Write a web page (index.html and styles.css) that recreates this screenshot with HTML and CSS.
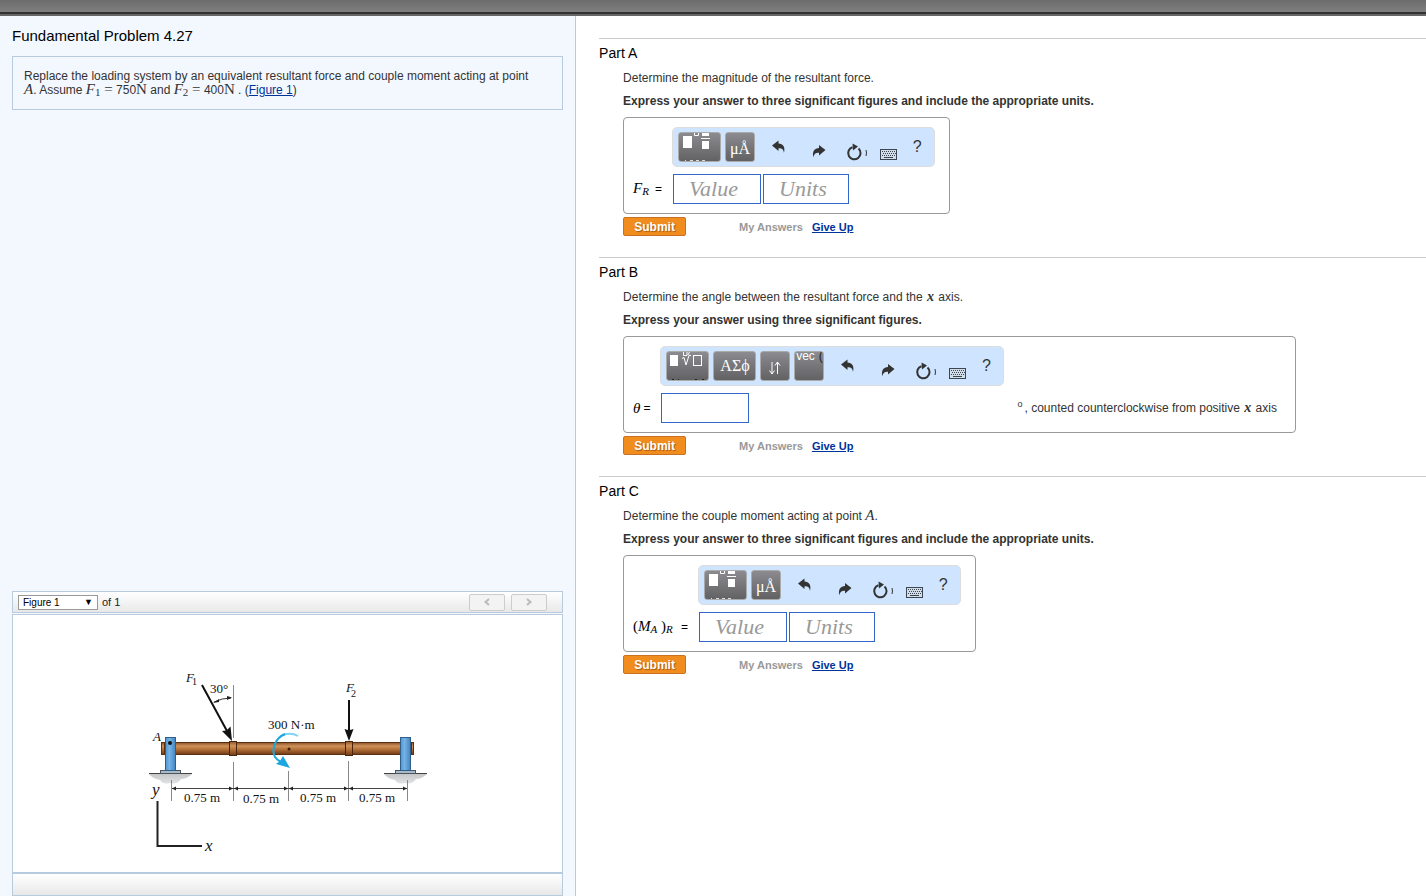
FILE: index.html
```html
<!DOCTYPE html>
<html lang="en">
<head>
  <meta charset="UTF-8" />
  <meta name="viewport" content="width=device-width, initial-scale=1.0" />
  <title>Fundamental Problem 4.27</title>
  <link rel="stylesheet" href="styles.css">
</head>
<body>
  <!-- Shared toolbar icons -->
  <svg class="icon-defs" aria-hidden="true">
    <symbol id="icon-undo" viewBox="0 0 35 30">
      <path d="M10 13.5 L16.5 8.5 V11.5 C21 11.5 23.5 15 22 21 C21.5 17.5 20 16.2 16.5 16.3 V19 Z" fill="#333"/>
    </symbol>
    <symbol id="icon-redo" viewBox="0 0 35 30">
      <path d="M28.5 18 L22 13 V16 C17.5 16 15 19.5 16.3 25.5 C17 22 18.5 20.8 22 20.8 V23.5 Z" fill="#333"/>
    </symbol>
    <symbol id="icon-reset" viewBox="0 0 35 30">
      <path d="M26.5 16.5 A6.2 6.2 0 1 1 20.5 15.200" fill="none" stroke="#333" stroke-width="2"/>
      <path d="M20.500 11.500 L26 14.500 L21 18.500 Z" fill="#333"/>
      <path d="M34 18 Q35 21 34 24" fill="none" stroke="#333" stroke-width="1"/>
    </symbol>
    <symbol id="icon-keyboard" viewBox="0 0 35 30">
      <rect x="13.5" y="17.5" width="16" height="10" fill="#d3dde8" stroke="#3c4652"/>
      <path d="M15 19.5 H28 M16 21.5 H29 M15 23.5 H28" stroke="#3c4652" stroke-width="1" stroke-dasharray="1 1"/>
      <path d="M17 25.5 H26" stroke="#3c4652"/>
    </symbol>
    <symbol id="icon-templates" viewBox="0 0 43 30">
      <rect x="5" y="4" width="9" height="12" fill="#fff"/>
      <path d="M16.5 0 V3.5 H20.5 V0" fill="none" stroke="#fff"/>
      <rect x="24" y="0" width="7" height="4" fill="#fff"/>
      <path d="M23 6.500 H32" stroke="#fff"/>
      <rect x="24" y="9" width="7" height="8" fill="#fff"/>
      <path d="M7 28.5 H8 M12 28.5 H15 M18 28.5 H21 M24 28.5 H27" stroke="#ddd"/>
    </symbol>
    <symbol id="icon-root" viewBox="0 0 43 30">
      <rect x="4" y="4" width="8" height="11" fill="#fff"/>
      <path d="M17.5 0 V4.500 H21 V0 M22 4 L24 0" fill="none" stroke="#fff"/>
      <path d="M16 7.5 L18 6.5 L20 14 L23 4.500 H25" fill="none" stroke="#fff"/>
      <rect x="27.5" y="4.5" width="8" height="10" fill="none" stroke="#fff"/>
      <path d="M6 28.5 H8 M12 28.5 H13 M29 28.5 H31 M36 28.5 H38" stroke="#222"/>
    </symbol>
    <symbol id="icon-arrows" viewBox="0 0 30 30">
      <path d="M12 11 V23 M9.5 19.5 L12 23 L14.5 19.5 M17.5 23 V11 M15 14.5 L17.5 11 L20 14.5" fill="none" stroke="#fff"/>
    </symbol>
  </svg>

  <header class="top-bar"></header>

  <div class="layout">
    <aside class="problem-pane">
      <h1 class="problem-title">Fundamental Problem 4.27</h1>
      <div class="problem-text">
        Replace the loading system by an equivalent resultant force and couple moment acting at point <i class="math">A</i>. Assume <span class="math"><i>F</i><sub>1</sub> =</span> 750<span class="math">N</span> and <span class="math"><i>F</i><sub>2</sub> =</span> 400<span class="math">N</span> . (<a href="#figure">Figure 1</a>)
      </div>

      <section class="figure-panel" id="figure">
        <div class="figure-header">
          <div class="figure-select">
            <select id="figure-number" aria-label="Figure">
              <option>Figure 1</option>
            </select>
            <span class="select-arrow">▼</span>
          </div>
          <label for="figure-number">of 1</label>
          <div class="figure-nav">
            <button type="button" aria-label="Previous figure" disabled>
              <svg width="8" height="8" viewBox="0 0 8 8"><path d="M6 1 L2.5 4 L6 7" fill="none" stroke="#bbb" stroke-width="2"/></svg>
            </button>
            <button type="button" aria-label="Next figure" disabled>
              <svg width="8" height="8" viewBox="0 0 8 8"><path d="M2 1 L5.5 4 L2 7" fill="none" stroke="#bbb" stroke-width="2"/></svg>
            </button>
          </div>
        </div>
        <div class="figure-body">
          <svg class="diagram" width="290" height="190" viewBox="0 0 290 190">
            <defs>
              <linearGradient id="shaft" x1="0" y1="0" x2="0" y2="1">
                <stop offset="0" stop-color="#8a5026"/>
                <stop offset="0.3" stop-color="#cf935a"/>
                <stop offset="0.6" stop-color="#b06c35"/>
                <stop offset="1" stop-color="#6e3a17"/>
              </linearGradient>
              <linearGradient id="post" x1="0" y1="0" x2="1" y2="0">
                <stop offset="0" stop-color="#4f95d2"/>
                <stop offset="0.4" stop-color="#76b3e4"/>
                <stop offset="1" stop-color="#4285c2"/>
              </linearGradient>
              <linearGradient id="ground" x1="0" y1="0" x2="0" y2="1">
                <stop offset="0" stop-color="#c4c6c8"/>
                <stop offset="1" stop-color="#e2e3e4"/>
              </linearGradient>
            </defs>

            <!-- ground -->
            <path d="M6 107 H49 Q44 112 38 112 Q34 118 27 116 Q20 118 17 113 Q10 112 6 107 Z" fill="url(#ground)"/>
            <path d="M241 107 H284 Q279 112 273 112 Q269 118 262 116 Q255 118 252 113 Q245 112 241 107 Z" fill="url(#ground)"/>
            <path d="M6 106.5 H49 M241 106.5 H284" stroke="#444"/>
            <rect x="17.5" y="103.5" width="20" height="3" fill="#a9bac6" stroke="#4b5660"/>
            <rect x="252.5" y="103.5" width="20" height="3" fill="#a9bac6" stroke="#4b5660"/>

            <!-- shaft and supports -->
            <rect x="18.5" y="75.5" width="252" height="12" fill="url(#shaft)" stroke="#5b3011"/>
            <rect x="86.5" y="74.5" width="7" height="14" fill="url(#shaft)" stroke="#4a250b"/>
            <rect x="202.5" y="74.5" width="7" height="14" fill="url(#shaft)" stroke="#4a250b"/>
            <path d="M21.5 76 V87 M268.5 76 V87" stroke="#5b3011"/>
            <rect x="22.5" y="70.5" width="10" height="33" fill="url(#post)" stroke="#2e5f8c"/>
            <rect x="257.5" y="70.5" width="10" height="33" fill="url(#post)" stroke="#2e5f8c"/>
            <circle cx="27" cy="76" r="2" fill="#111"/>
            <circle cx="146" cy="82" r="1.5" fill="#3a1c08"/>

            <!-- forces and moment -->
            <path d="M59 18 L84 64" stroke="#111" stroke-width="2"/>
            <path d="M89 74 L79 64 L83.5 63.5 L87.5 59.500 Z" fill="#111"/>
            <path d="M206 33 V64" stroke="#111" stroke-width="2"/>
            <path d="M206 74 L201.500 62 Q206 64 210.500 62 Z" fill="#111"/>
            <path d="M155 69 Q148 65 140 68" fill="none" stroke="#7fd3f5" stroke-width="2"/>
            <path d="M142 67 C132 71 128 83 132 90 Q134 93 138 95" fill="none" stroke="#1aa7e0" stroke-width="2"/>
            <path d="M147 101 L133 97 L137 94 L140 89 Z" fill="#1aa7e0"/>
            <path d="M71 35 Q79 31 88 31" fill="none" stroke="#333"/>
            <path d="M70 36 L76 32 L76 35 Z M89 30.5 L84 29 L84 33 Z" fill="#222"/>

            <!-- dimension lines -->
            <path d="M90.5 18 V71 M90.5 95 V134 M28.5 113 V134 M145.5 104 V134 M205.5 94 V134 M264.5 113 V134" stroke="#888"/>
            <path d="M29 121.5 H264" stroke="#444"/>
            <path d="M29 121.5 l4 -2 v4 Z M90 121.5 l-4 -2 v4 Z M91 121.5 l4 -2 v4 Z M145 121.5 l-4 -2 v4 Z M146 121.5 l4 -2 v4 Z M205 121.5 l-4 -2 v4 Z M206 121.5 l4 -2 v4 Z M264 121.5 l-4 -2 v4 Z" fill="#222"/>

            <!-- axes -->
            <path d="M14.5 134 V179 H59" fill="none" stroke="#222" stroke-width="2"/>

            <g class="diagram-text">
              <text class="var" x="43" y="15">F</text>
              <text class="index" x="49" y="18">1</text>
              <text x="67" y="26">30°</text>
              <text class="var" x="203" y="25">F</text>
              <text class="index" x="208" y="30">2</text>
              <text x="125" y="62">300 N·m</text>
              <text class="var" x="10" y="74">A</text>
              <text x="41" y="135">0.75 m</text>
              <text x="100" y="136">0.75 m</text>
              <text x="157" y="135">0.75 m</text>
              <text x="216" y="135">0.75 m</text>
              <text class="axis" x="9" y="128">y</text>
              <text class="axis" x="62" y="184">x</text>
            </g>
          </svg>
        </div>
        <div class="figure-footer"></div>
      </section>
    </aside>

    <main class="parts">
      <section class="part">
        <h2>Part A</h2>
        <p>Determine the magnitude of the resultant force.</p>
        <p class="instructions">Express your answer to three significant figures and include the appropriate units.</p>
        <form>
          <div class="answer-box">
            <div class="toolbar">
              <button type="button" class="tool" aria-label="Templates"><svg width="43" height="30"><use href="#icon-templates"/></svg></button>
              <button type="button" class="tool tool-small tool-units">μÅ</button>
              <div class="tool-icons">
                <button type="button" aria-label="Undo"><svg width="35" height="30"><use href="#icon-undo"/></svg></button>
                <button type="button" aria-label="Redo"><svg width="35" height="30"><use href="#icon-redo"/></svg></button>
                <button type="button" aria-label="Reset"><svg width="35" height="30"><use href="#icon-reset"/></svg></button>
                <button type="button" aria-label="Keyboard shortcuts"><svg width="35" height="30"><use href="#icon-keyboard"/></svg></button>
                <button type="button" class="help">?</button>
              </div>
            </div>
            <label class="label-force" for="value-a"><span class="math"><i>F<sub>R</sub></i></span> <span>=</span></label>
            <div class="fields">
              <input type="text" id="value-a" placeholder="Value">
              <input type="text" class="units" aria-label="Units" placeholder="Units">
            </div>
          </div>
          <div class="actions">
            <button type="submit" class="submit">Submit</button>
            <span class="my-answers">My Answers</span>
            <a href="#give-up-a">Give Up</a>
          </div>
        </form>
      </section>

      <section class="part">
        <h2>Part B</h2>
        <p>Determine the angle between the resultant force and the <i class="math math-x">x</i> axis.</p>
        <p class="instructions">Express your answer using three significant figures.</p>
        <form>
          <div class="answer-box">
            <div class="toolbar">
              <button type="button" class="tool" aria-label="Roots"><svg width="43" height="30"><use href="#icon-root"/></svg></button>
              <button type="button" class="tool tool-greek">ΑΣϕ</button>
              <button type="button" class="tool tool-small" aria-label="Arrows"><svg width="30" height="30"><use href="#icon-arrows"/></svg></button>
              <button type="button" class="tool tool-small tool-vec">vec <span>(</span></button>
              <div class="tool-icons">
                <button type="button" aria-label="Undo"><svg width="35" height="30"><use href="#icon-undo"/></svg></button>
                <button type="button" aria-label="Redo"><svg width="35" height="30"><use href="#icon-redo"/></svg></button>
                <button type="button" aria-label="Reset"><svg width="35" height="30"><use href="#icon-reset"/></svg></button>
                <button type="button" aria-label="Keyboard shortcuts"><svg width="35" height="30"><use href="#icon-keyboard"/></svg></button>
                <button type="button" class="help">?</button>
              </div>
            </div>
            <label for="value-b"><i class="math">θ</i> <span>=</span></label>
            <div class="fields">
              <input type="text" id="value-b">
            </div>
            <div class="suffix"><sup>o</sup>, counted counterclockwise from positive <i class="math math-x">x</i> axis</div>
          </div>
          <div class="actions">
            <button type="submit" class="submit">Submit</button>
            <span class="my-answers">My Answers</span>
            <a href="#give-up-b">Give Up</a>
          </div>
        </form>
      </section>

      <section class="part">
        <h2>Part C</h2>
        <p>Determine the couple moment acting at point <i class="math">A</i>.</p>
        <p class="instructions">Express your answer to three significant figures and include the appropriate units.</p>
        <form>
          <div class="answer-box">
            <div class="toolbar">
              <button type="button" class="tool" aria-label="Templates"><svg width="43" height="30"><use href="#icon-templates"/></svg></button>
              <button type="button" class="tool tool-small tool-units">μÅ</button>
              <div class="tool-icons">
                <button type="button" aria-label="Undo"><svg width="35" height="30"><use href="#icon-undo"/></svg></button>
                <button type="button" aria-label="Redo"><svg width="35" height="30"><use href="#icon-redo"/></svg></button>
                <button type="button" aria-label="Reset"><svg width="35" height="30"><use href="#icon-reset"/></svg></button>
                <button type="button" aria-label="Keyboard shortcuts"><svg width="35" height="30"><use href="#icon-keyboard"/></svg></button>
                <button type="button" class="help">?</button>
              </div>
            </div>
            <label class="label-moment" for="value-c"><span class="math">(<i>M<sub>A</sub></i> )<sub><i>R</i></sub></span> <span>=</span></label>
            <div class="fields">
              <input type="text" id="value-c" placeholder="Value">
              <input type="text" class="units" aria-label="Units" placeholder="Units">
            </div>
          </div>
          <div class="actions">
            <button type="submit" class="submit">Submit</button>
            <span class="my-answers">My Answers</span>
            <a href="#give-up-c">Give Up</a>
          </div>
        </form>
      </section>
    </main>
  </div>
</body>
</html>
```

FILE: styles.css
```css
* {
  box-sizing: border-box;
}

body {
  margin: 0;
  min-height: 100vh;
  display: flex;
  flex-direction: column;
  font-family: "Liberation Sans", Arial, sans-serif;
  font-size: 12px;
  line-height: 14px;
  color: #333;
  background: #fff;
}

a {
  color: #039;
}

button {
  font-family: inherit;
  padding: 0;
  cursor: pointer;
}

.icon-defs {
  display: none;
}

.math {
  font-family: "Liberation Serif", serif;
  font-size: 15px;
  line-height: 0;
}

.math sub {
  font-size: 11px;
  line-height: 0;
  vertical-align: -2px;
}

.math-x {
  padding: 0 1px;
  font-size: 14px;
  font-weight: 700;
}

.top-bar {
  height: 16px;
  background: linear-gradient(#6c6c6c, #828282);
  border-bottom: 2px solid #666;
  box-shadow: inset 0 -2px #333;
}

.layout {
  flex: 1;
  display: grid;
  grid-template-columns: 40.4% 1fr;
}

/* Problem statement */
.problem-pane {
  display: flex;
  flex-direction: column;
  padding: 11px 12px 0;
  background: #f3f8ff;
  border-right: 1px solid #b8cbde;
}

.problem-title {
  margin: 0 0 11px;
  font-size: 15px;
  line-height: 18px;
  font-weight: 400;
  color: #000;
}

.problem-text {
  padding: 12px 24px 12px 11px;
  border: 1px solid #b8cbde;
  min-height: 54px;
}

/* Figure */
.figure-panel {
  margin-top: auto;
}

.figure-header {
  display: flex;
  align-items: center;
  gap: 4px;
  height: 22px;
  margin-bottom: 1px;
  padding: 0 15px 0 5px;
  border: 1px solid #b8cbde;
  background: linear-gradient(#fff, #e8e8e8);
  font-size: 11px;
  color: #222;
}

.figure-select {
  position: relative;
}

.figure-select select {
  display: block;
  width: 80px;
  height: 15px;
  padding: 0 4px;
  border: 1px solid #999;
  border-radius: 0;
  appearance: none;
  background: #fff;
  font-family: inherit;
  font-size: 10px;
  color: #000;
}

.select-arrow {
  position: absolute;
  top: 0;
  right: 5px;
  font-size: 9px;
  color: #000;
  pointer-events: none;
}

.figure-nav {
  display: flex;
  gap: 6px;
  margin-left: auto;
}

.figure-nav button {
  display: flex;
  align-items: center;
  justify-content: center;
  width: 36px;
  height: 17px;
  border: 1px solid #ccc;
  border-radius: 2px;
  background: #f3f3f3;
}

.figure-body {
  display: flex;
  justify-content: center;
  padding: 52px 0 15px;
  background: #fff;
  border: 1px solid #b8cbde;
}

.diagram-text {
  font-family: "Liberation Serif", serif;
  font-size: 13px;
  fill: #111;
}

.diagram-text .var {
  font-style: italic;
}

.diagram-text .index {
  font-size: 10px;
}

.diagram-text .axis {
  font-size: 17px;
  font-style: italic;
}

.figure-footer {
  height: 23px;
  border: 1px solid #b8cbde;
  background: linear-gradient(#fff, #e8e8e8);
}

/* Parts */
.parts {
  padding: 22px 0 0 23px;
}

.part {
  height: 219px;
  padding: 7px 0 0 24px;
  border-top: 1px solid #ccc;
}

.part h2 {
  margin: 0 0 11px -24px;
  font-size: 14px;
  line-height: 14px;
  font-weight: 400;
  color: #000;
}

.part p {
  margin: 0 0 9px;
}

.part .instructions {
  font-weight: 700;
}

.answer-box {
  display: inline-grid;
  grid-template-columns: repeat(3, auto);
  column-gap: 10px;
  row-gap: 7px;
  align-items: center;
  padding: 9px 4px 9px 9px;
  border: 1px solid #999;
  border-radius: 4px;
  vertical-align: top;
}

.toolbar {
  grid-column: 2;
  display: flex;
  gap: 4px;
  height: 40px;
  padding: 4px 2px 4px 5px;
  border: 1px solid #ddd;
  border-radius: 5px;
  background: #cfe5ff;
}

.tool {
  width: 43px;
  height: 30px;
  border: 1px solid #aaa;
  border-radius: 3px;
  background: linear-gradient(#8b8b90, #626264);
  color: #fff;
  overflow: hidden;
}

.tool svg {
  display: block;
  margin: -1px;
}

.tool-small {
  width: 30px;
}

.tool-units,
.tool-greek {
  font-family: "Liberation Serif", serif;
  font-size: 16px;
}

.tool-units {
  padding-top: 4px;
}

.tool-vec {
  display: flex;
  justify-content: center;
  gap: 4px;
  align-items: flex-start;
  font-size: 12px;
  line-height: 8px;
}

.tool-vec span {
  color: #222;
}

.tool-icons {
  display: flex;
  margin-left: 3px;
}

.tool-icons button {
  width: 35px;
  height: 30px;
  border: 0;
  background: none;
}

.tool-icons svg {
  display: block;
}

.tool-icons .help {
  width: 30px;
  font-size: 16px;
  color: #333;
}

.answer-box label {
  grid-column: 1;
  display: flex;
  align-items: center;
  justify-content: space-between;
  gap: 3px;
  color: #000;
}

.label-force {
  min-width: 29px;
}

.label-moment {
  min-width: 55px;
}

.fields {
  display: flex;
  gap: 2px;
  padding-left: 1px;
}

.fields input {
  width: 88px;
  height: 30px;
  padding: 0 15px;
  border: 1px solid #36c;
  font-family: "Liberation Serif", serif;
  font-size: 22px;
  font-style: italic;
}

.fields .units {
  width: 86px;
}

.fields input::placeholder {
  color: #999;
}

.suffix {
  padding: 0 14px 0 3px;
}

.suffix sup {
  margin-right: 2px;
  font-size: 9px;
  line-height: 0;
}

.actions {
  display: flex;
  align-items: center;
  margin-top: 3px;
  font-weight: 700;
  font-size: 11px;
}

.submit {
  width: 63px;
  height: 19px;
  border: 1px solid #c97022;
  border-radius: 2px;
  background: #f18d1f;
  color: #fff;
  font-size: 12px;
  font-weight: 700;
  text-shadow: 1px 1px 1px #a55a10;
}

.my-answers {
  margin: 0 9px 0 53px;
  color: #999;
}
```
